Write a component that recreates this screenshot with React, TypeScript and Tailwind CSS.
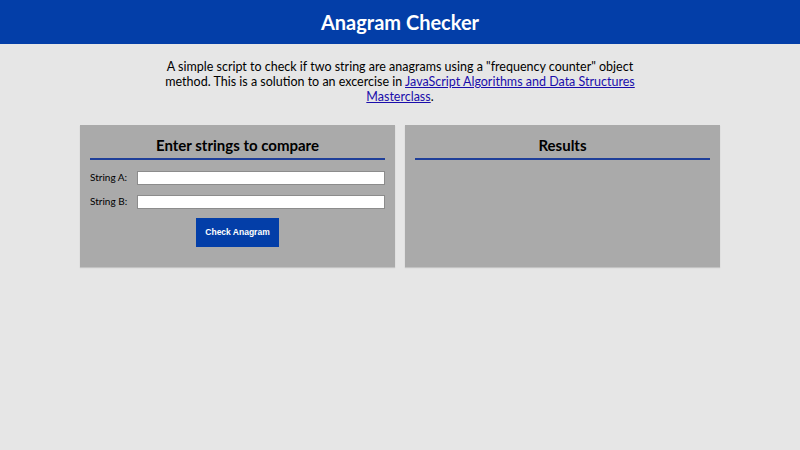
export default function App() {
  return (
    <div className="min-h-screen bg-[#e6e6e6] font-['Lato','Liberation_Sans',sans-serif] text-black">
      <header className="h-[44px] bg-[#033ea8] flex items-center justify-center">
        <h1 className="text-[20px] font-bold text-white leading-none">Anagram Checker</h1>
      </header>

      <p className="mx-auto mt-[15px] w-[480px] text-center text-[12.5px] leading-[15px]">
        A simple script to check if two string are anagrams using a "frequency counter" object
        method. This is a solution to an excercise in{' '}
        <a href="#" className="text-[#1a0dab] underline">
          JavaScript Algorithms and Data Structures Masterclass
        </a>
        .
      </p>

      <div className="mx-auto mt-[21px] w-[640px] grid grid-cols-2 gap-[10px]">
        {/* Input panel */}
        <section className="h-[142px] bg-[#aaaaaa] px-[10px] pt-[10px] shadow-[0_1px_1px_rgba(0,0,0,0.15)]">
          <h2 className="text-center text-[15px] font-bold leading-[20px] pb-[3px] border-b-2 border-[#1f3f99]">
            Enter strings to compare
          </h2>
          <div className="mt-[10px] flex items-center">
            <label className="w-[47px] text-[10px]">String A:</label>
            <input className="flex-1 h-[14px] bg-white border border-[#8c8c8c] outline-none" />
          </div>
          <div className="mt-[9px] flex items-center">
            <label className="w-[47px] text-[10px]">String B:</label>
            <input className="flex-1 h-[14px] bg-white border border-[#8c8c8c] outline-none" />
          </div>
          <div className="mt-[9px] flex justify-center">
            <button className="w-[83px] h-[29px] bg-[#033ea8] text-white text-[8.5px] font-bold font-['Liberation_Sans',Arial,sans-serif]">
              Check Anagram
            </button>
          </div>
        </section>

        {/* Results panel */}
        <section className="h-[142px] bg-[#aaaaaa] px-[10px] pt-[10px] shadow-[0_1px_1px_rgba(0,0,0,0.15)]">
          <h2 className="text-center text-[15px] font-bold leading-[20px] pb-[3px] border-b-2 border-[#1f3f99]">
            Results
          </h2>
        </section>
      </div>
    </div>
  )
}
